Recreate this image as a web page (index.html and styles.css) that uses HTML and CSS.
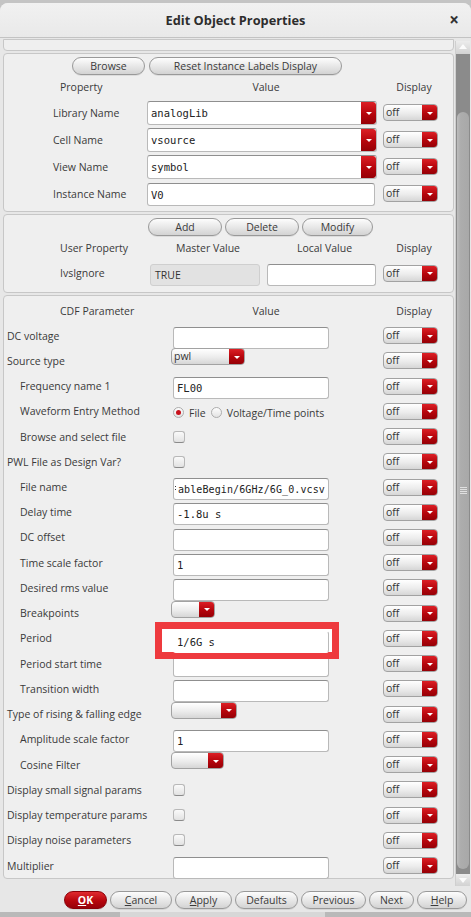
FILE: index.html
```html
<!DOCTYPE html>
<html>
<head>
<meta charset="utf-8">
<title>Edit Object Properties</title>
<link rel="stylesheet" href="styles.css">
</head>
<body>
<div class="window">
  <div class="titlebar"><span class="title">Edit Object Properties</span><span class="close">×</span></div>
  <div class="content">
    <div class="main">
      <div class="sec sec0"></div>

      <div class="sec sec1">
        <div class="btnrow br1"><div class="btn w-browse">Browse</div><div class="btn w-reset">Reset Instance Labels Display</div></div>
        <div class="g2 hdr"><span class="h-first">Property</span><span class="h-val2">Value</span><span class="h-disp">Display</span></div>
        <div class="g2 r27"><span class="lbl2">Library Name</span><div class="vcombo"><span class="mono vtext">analogLib</span><span class="cbtn big"></span></div><div class="combo disp"><span class="ctext">off</span><span class="cbtn"></span></div></div>
        <div class="g2 r27"><span class="lbl2">Cell Name</span><div class="vcombo"><span class="mono vtext">vsource</span><span class="cbtn big"></span></div><div class="combo disp"><span class="ctext">off</span><span class="cbtn"></span></div></div>
        <div class="g2 r27"><span class="lbl2">View Name</span><div class="vcombo"><span class="mono vtext">symbol</span><span class="cbtn big"></span></div><div class="combo disp"><span class="ctext">off</span><span class="cbtn"></span></div></div>
        <div class="g2 r27"><span class="lbl2">Instance Name</span><div class="field inst"><span class="mono">V0</span></div><div class="combo disp"><span class="ctext">off</span><span class="cbtn"></span></div></div>
      </div>

      <div class="sec sec2">
        <div class="btnrow br2"><div class="btn w-add">Add</div><div class="btn w-del">Delete</div><div class="btn w-mod">Modify</div></div>
        <div class="g3 hdr3"><span class="h-first">User Property</span><span class="h-c">Master Value</span><span></span><span class="h-c">Local Value</span><span></span><span class="h-disp">Display</span></div>
        <div class="g3 r28"><span class="lbl3">IvsIgnore</span><div class="field master">TRUE</div><span></span><div class="field local"></div><span></span><div class="combo disp"><span class="ctext">off</span><span class="cbtn"></span></div></div>
      </div>

      <div class="sec sec3">
        <div class="g4 hdr4"><span class="h-first">CDF Parameter</span><span class="h-val4">Value</span><span class="h-disp">Display</span></div>

        <div class="row"><span class="lbl top">DC voltage</span><div class="val"><div class="field in"></div></div><div class="combo disp"><span class="ctext">off</span><span class="cbtn"></span></div></div>
        <div class="row"><span class="lbl top">Source type</span><div class="val"><div class="combo vsel w-pwl"><span class="ctext">pwl</span><span class="cbtn"></span></div></div><div class="combo disp"><span class="ctext">off</span><span class="cbtn"></span></div></div>
        <div class="row"><span class="lbl ind">Frequency name 1</span><div class="val"><div class="field in"><span class="mono">FL00</span></div></div><div class="combo disp"><span class="ctext">off</span><span class="cbtn"></span></div></div>
        <div class="row"><span class="lbl ind">Waveform Entry Method</span><div class="val radios"><span class="radio on"></span><span class="rtext">File</span><span class="radio"></span><span class="rtext">Voltage/Time points</span></div><div class="combo disp"><span class="ctext">off</span><span class="cbtn"></span></div></div>
        <div class="row"><span class="lbl ind">Browse and select file</span><div class="val"><span class="check"></span></div><div class="combo disp"><span class="ctext">off</span><span class="cbtn"></span></div></div>
        <div class="row"><span class="lbl top">PWL File as Design Var?</span><div class="val"><span class="check"></span></div><div class="combo disp"><span class="ctext">off</span><span class="cbtn"></span></div></div>
        <div class="row"><span class="lbl ind">File name</span><div class="val"><div class="field in sliver"><span class="mono fname">ableBegin/6GHz/6G_0.vcsv</span></div></div><div class="combo disp"><span class="ctext">off</span><span class="cbtn"></span></div></div>
        <div class="row"><span class="lbl ind">Delay time</span><div class="val"><div class="field in"><span class="mono">-1.8u s</span></div></div><div class="combo disp"><span class="ctext">off</span><span class="cbtn"></span></div></div>
        <div class="row"><span class="lbl ind">DC offset</span><div class="val"><div class="field in"></div></div><div class="combo disp"><span class="ctext">off</span><span class="cbtn"></span></div></div>
        <div class="row"><span class="lbl ind">Time scale factor</span><div class="val"><div class="field in"><span class="mono">1</span></div></div><div class="combo disp"><span class="ctext">off</span><span class="cbtn"></span></div></div>
        <div class="row"><span class="lbl ind">Desired rms value</span><div class="val"><div class="field in"></div></div><div class="combo disp"><span class="ctext">off</span><span class="cbtn"></span></div></div>
        <div class="row"><span class="lbl ind">Breakpoints</span><div class="val"><div class="combo vsel w-bp"><span class="ctext"></span><span class="cbtn"></span></div></div><div class="combo disp"><span class="ctext">off</span><span class="cbtn"></span></div></div>
        <div class="row"><span class="lbl ind">Period</span><div class="val hl-host"><div class="highlight"></div><div class="field in over"><span class="mono">1/6G s</span></div></div><div class="combo disp"><span class="ctext">off</span><span class="cbtn"></span></div></div>
        <div class="row"><span class="lbl ind">Period start time</span><div class="val"><div class="field in"></div></div><div class="combo disp"><span class="ctext">off</span><span class="cbtn"></span></div></div>
        <div class="row"><span class="lbl ind">Transition width</span><div class="val"><div class="field in"></div></div><div class="combo disp"><span class="ctext">off</span><span class="cbtn"></span></div></div>
        <div class="row"><span class="lbl top">Type of rising &amp; falling edge</span><div class="val"><div class="combo vsel w-edge"><span class="ctext"></span><span class="cbtn"></span></div></div><div class="combo disp"><span class="ctext">off</span><span class="cbtn"></span></div></div>
        <div class="row"><span class="lbl ind">Amplitude scale factor</span><div class="val"><div class="field in"><span class="mono">1</span></div></div><div class="combo disp"><span class="ctext">off</span><span class="cbtn"></span></div></div>
        <div class="row"><span class="lbl ind">Cosine Filter</span><div class="val"><div class="combo vsel w-cos"><span class="ctext"></span><span class="cbtn"></span></div></div><div class="combo disp"><span class="ctext">off</span><span class="cbtn"></span></div></div>
        <div class="row"><span class="lbl top">Display small signal params</span><div class="val"><span class="check"></span></div><div class="combo disp"><span class="ctext">off</span><span class="cbtn"></span></div></div>
        <div class="row"><span class="lbl top">Display temperature params</span><div class="val"><span class="check"></span></div><div class="combo disp"><span class="ctext">off</span><span class="cbtn"></span></div></div>
        <div class="row"><span class="lbl top">Display noise parameters</span><div class="val"><span class="check"></span></div><div class="combo disp"><span class="ctext">off</span><span class="cbtn"></span></div></div>
        <div class="row"><span class="lbl top">Multiplier</span><div class="val"><div class="field in"></div></div><div class="combo disp"><span class="ctext">off</span><span class="cbtn"></span></div></div>
      </div>
    </div>

    <div class="scroll">
      <div class="arrow up"></div>
      <div class="trough t1"></div>
      <div class="thumb"><span class="grip"></span></div>
      <div class="trough t2"></div>
      <div class="arrow down"></div>
    </div>
  </div>

  <div class="footer">
    <div class="btn ok"><u>O</u>K</div>
    <div class="btn w-cancel"><u>C</u>ancel</div>
    <div class="btn w-apply"><u>A</u>pply</div>
    <div class="btn w-def">Defaults</div>
    <div class="btn w-prev">Previous</div>
    <div class="btn w-next">Next</div>
    <div class="btn w-help"><u>H</u>elp</div>
  </div>
</div>
<div class="strip"><span class="s1"></span><span class="s2"></span><span class="s3"></span></div>
</body>
</html>
```

FILE: styles.css
```css
* { box-sizing: border-box; }

body {
  margin: 0;
  width: 471px;
  height: 917px;
  overflow: hidden;
  background: #c4c4c4;
  font-family: "Open Sans", "Noto Sans", sans-serif;
  font-size: 10.5px;
  color: #3a3a3a;
}

.window {
  margin-top: 3px;
  height: 909px;
  background: #e7e7e7;
  border-radius: 8px 8px 0 0;
  display: flex;
  flex-direction: column;
}

.titlebar {
  height: 35px;
  flex: none;
  position: relative;
  display: flex;
  align-items: center;
  justify-content: center;
  border-bottom: 1px solid #c3c3c3;
  border-radius: 8px 8px 0 0;
  background: linear-gradient(#f1f1f1, #e9e9e9);
}
.title { font-weight: 700; font-size: 12.8px; color: #2d2d2d; }
.close {
  position: absolute;
  right: 12px;
  top: 8px;
  font-size: 17px;
  font-weight: 700;
  color: #333;
  line-height: 18px;
}

.content { display: flex; height: 848px; flex: none; }
.main {
  width: 455px;
  padding: 1px 1px 0 3px;
  display: flex;
  flex-direction: column;
  gap: 2px;
  overflow: hidden;
}

.sec {
  background: #efefef;
  border: 1px solid #c7c7c7;
  border-radius: 4px;
  flex: none;
}
.sec0 { height: 12px; border-top-left-radius: 0; border-top-right-radius: 0; }
.sec1 { height: 159px; padding-top: 3px; }
.sec2 { height: 79px; padding-top: 3px; }
.sec3 { height: 584px; }

/* buttons */
.btnrow { display: flex; height: 18px; }
.br1 { padding-left: 68px; gap: 4px; }
.br2 { padding-left: 144px; gap: 3px; }
.btn {
  height: 18px;
  border: 1px solid #999;
  border-radius: 9px;
  background: linear-gradient(#fdfdfd, #e8e8e8 50%, #d3d3d3);
  display: flex;
  align-items: center;
  justify-content: center;
  font-size: 10.5px;
  color: #3a3a3a;
  box-shadow: 0 1px 0 rgba(0,0,0,0.08);
}
.w-browse { width: 73px; }
.w-reset { width: 193px; }
.w-add { width: 74px; }
.w-del { width: 74px; }
.w-mod { width: 71px; }

/* section 1 grid */
.g2 { display: grid; grid-template-columns: 143px 236px 55px; align-items: center; }
.hdr { height: 24px; }
.h-first { padding-left: 56px; }
.h-val2 { text-align: center; padding-left: 8px; padding-right: 6px; }
.h-disp { text-align: center; padding-left: 7px; }
.r27 { height: 27px; }
.lbl2 { padding-left: 49px; }

.field {
  background: #fff;
  border: 1px solid #b9b9b9;
  border-top-color: #8f8f8f;
  border-radius: 3px;
  display: flex;
  align-items: center;
  padding-left: 3px;
  overflow: hidden;
  white-space: nowrap;
}
.mono { font-family: "DejaVu Sans Mono", monospace; font-size: 10.5px; color: #222; }

.vcombo {
  width: 230px;
  height: 24px;
  display: flex;
  background: #fff;
  border: 1px solid #b9b9b9;
  border-top-color: #8f8f8f;
  border-radius: 3px;
  overflow: hidden;
}
.vtext { flex: 1; display: flex; align-items: center; padding-left: 3px; }
.inst { width: 228px; height: 23px; margin-top: 2px; }

/* combo boxes */
.combo {
  height: 17px;
  display: flex;
  border: 1px solid #a2a2a2;
  border-radius: 4px;
  overflow: hidden;
  background: linear-gradient(#ffffff, #ececec 55%, #d6d6d6);
}
.ctext { flex: 1; line-height: 15px; padding-left: 2px; font-size: 10.5px; color: #333; }
.cbtn {
  width: 15px;
  flex: none;
  position: relative;
  background: linear-gradient(#dc1f25, #b5050c 55%, #960006);
}
.cbtn::after {
  content: "";
  position: absolute;
  left: 50%;
  top: 50%;
  margin-left: -3px;
  margin-top: -1px;
  border-left: 3px solid transparent;
  border-right: 3px solid transparent;
  border-top: 3px solid #fff;
}
.cbtn.big { border-radius: 0 3px 3px 0; }
.disp { width: 55px; }

/* section 2 grid */
.g3 { display: grid; grid-template-columns: 146px 110px 7px 109px 7px 55px; align-items: center; }
.hdr3 { height: 23px; }
.h-c { text-align: center; padding-left: 6px; }
.r28 { height: 28px; }
.lbl3 { padding-left: 56px; }
.master { height: 22px; background: #e2e2e2; border-color: #cfcfcf; color: #333; font-size: 10.5px; padding-left: 4px; margin-top: 3px; }
.local { height: 22px; margin-top: 3px; }

/* section 3 */
.g4 { display: grid; grid-template-columns: 167px 212px 55px; align-items: center; }
.hdr4 { height: 27px; padding-top: 3px; }
.h-val4 { text-align: center; padding-right: 22px; }
.row { display: flex; align-items: center; height: 25.24px; }
.lbl { width: 167px; flex: none; white-space: nowrap; }
.lbl.top { padding-left: 3px; }
.lbl.ind { padding-left: 16px; }
.val { width: 212px; flex: none; display: flex; align-items: center; }
.in { width: 156px; height: 22px; margin-left: 2px; margin-top: 4px; }
.sliver { padding-left: 1px; }
.sliver::before {
  content: "";
  width: 1px;
  height: 1px;
  margin-right: 2px;
  background: #333;
  box-shadow: 0 -3px 0 #333;
  flex: none;
}
.fname { font-size: 10px; letter-spacing: 0.1px; }

.vsel { margin-bottom: 8px; }
.w-pwl { width: 74px; }
.w-bp { width: 44px; }
.w-edge { width: 66px; }
.w-cos { width: 53px; }

.check {
  width: 12px;
  height: 12px;
  margin-left: 2px;
  border: 1px solid #b8b8b8;
  border-bottom-color: #8a8a8a;
  border-radius: 3px;
  background: linear-gradient(#fafafa, #e2e2e2);
}
.radios { padding-left: 2px; margin-top: 3px; }
.radio {
  width: 11px;
  height: 11px;
  border-radius: 50%;
  border: 1px solid #adadad;
  background: linear-gradient(#fdfdfd, #e3e3e3);
  position: relative;
}
.radio.on::after {
  content: "";
  position: absolute;
  left: 2px;
  top: 2px;
  width: 5px;
  height: 5px;
  border-radius: 50%;
  background: #c8101a;
}
.rtext { margin-left: 5px; margin-right: 5px; }

.hl-host { position: relative; }
.highlight {
  position: absolute;
  left: -16px;
  top: -2px;
  width: 184px;
  height: 37px;
  border: 7px solid #ee3a3e;
  background: #fff;
}
.over { position: relative; z-index: 1; margin-top: 7px; border-color: #fff; border-right-color: #b9b9b9; }

/* scrollbar */
.scroll {
  width: 15px;
  margin-top: 3px;
  height: 845px;
  display: flex;
  flex-direction: column;
  background: #8b8b8b;
  border-left: 1px solid #cfcfcf;
}
.arrow {
  height: 13px;
  flex: none;
  background: linear-gradient(#ececec, #d2d2d2);
  position: relative;
}
.arrow.down { height: 12px; }
.arrow.up::after, .arrow.down::after {
  content: "";
  position: absolute;
  left: 3px;
  border-left: 4px solid transparent;
  border-right: 4px solid transparent;
}
.arrow.up::after { top: 3px; border-bottom: 5px solid #fbfbfb; }
.arrow.down::after { top: 4px; border-top: 5px solid #fbfbfb; }
.t1 { height: 58px; flex: none; }
.t2 { height: 5px; flex: none; }
.thumb {
  height: 757px;
  flex: none;
  margin: 0 1px;
  border-radius: 7px;
  background: linear-gradient(90deg, #bdbdbd, #adadad 30%, #a8a8a8);
  display: flex;
  align-items: center;
  justify-content: center;
}
.grip {
  width: 7px;
  height: 7px;
  background: repeating-linear-gradient(#e0e0e0 0 1px, transparent 1px 2px);
}

/* footer */
.footer {
  height: 26px;
  flex: none;
  display: flex;
  gap: 3px;
  padding: 5px 0 0 64px;
}
.footer .btn { height: 18px; }
.ok {
  width: 43px;
  background: linear-gradient(#e02a2f, #b7060d 55%, #97000a);
  border-color: #8a0008;
  color: #fff;
  font-weight: 700;
}
.w-cancel { width: 62px; }
.w-apply { width: 57px; }
.w-def { width: 63px; }
.w-prev { width: 65px; }
.w-next { width: 45px; }
.w-help { width: 50px; }
.btn u { text-decoration: underline; }

.strip { height: 5px; display: flex; background: #b9b9b9; }
.strip span { display: block; height: 5px; }
.s1 { width: 120px; }
.s2 { width: 205px; background: #d7d7d7; }
.s3 { width: 10px; }
```
